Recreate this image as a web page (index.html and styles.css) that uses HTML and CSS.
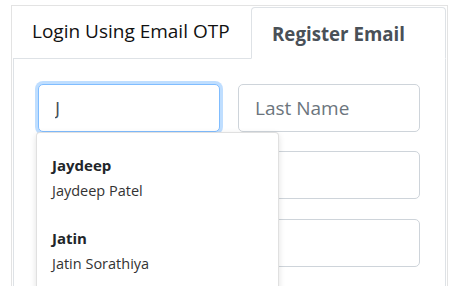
FILE: index.html
```html
<!DOCTYPE html>
<html lang="en">
<head>
<meta charset="utf-8">
<title>Register Email</title>
<link rel="stylesheet" href="styles.css">
</head>
<body>
<div class="card">
  <div class="tabs">
    <div class="tab">Login Using Email OTP</div>
    <div class="tab active">Register Email</div>
  </div>
  <div class="panel">
    <div class="row">
      <div class="field">
        <input class="input focus" type="text" value="J">
        <div class="dropdown">
          <div class="item">
            <div class="title">Jaydeep</div>
            <div class="sub">Jaydeep Patel</div>
          </div>
          <div class="item">
            <div class="title">Jatin</div>
            <div class="sub">Jatin Sorathiya</div>
          </div>
        </div>
      </div>
      <div class="field">
        <input class="input" type="text" placeholder="Last Name">
      </div>
    </div>
    <div class="full"><input class="input" type="text"></div>
    <div class="full"><input class="input" type="text"></div>
  </div>
</div>
</body>
</html>
```
FILE: styles.css
```css
* { box-sizing: border-box; }
html, body { margin: 0; padding: 0; background: #fff; }
body { font-family: "Open Sans", "Noto Sans", sans-serif; color: #212529; overflow: hidden; height: 286px; }

.card {
  margin: 5px 0 0 11px;
  width: 437px;
  border: 1px solid #e3e3e3;
  border-bottom: none;
  padding: 0 1px 0 1px;
}

.tabs {
  display: flex;
  border-bottom: 1px solid #dee2e6;
  height: 53px;
  padding-top: 1px;
}
.tab {
  width: 238px;
  padding: 11px 0 0 19px;
  font-size: 19px;
  color: #111;
  white-space: nowrap;
}
.tab.active {
  width: 195px;
  border: 1px solid #dee2e6;
  border-bottom-color: #fff;
  border-radius: 4px 4px 0 0;
  margin-bottom: -1px;
  padding: 13px 0 0 20px;
  font-size: 18.7px;
  font-weight: 700;
  color: #495057;
}

.panel {
  border: 1px solid #dee2e6;
  border-top: none;
  padding: 25px 25px 40px 24px;
}
.row {
  display: flex;
  gap: 18px;
  margin-bottom: 19px;
}
.field { flex: 1; position: relative; }
.full { margin-bottom: 20px; }

.input {
  display: block;
  width: 100%;
  height: 48px;
  padding: 8px 16px;
  font-family: inherit;
  font-size: 19px;
  color: #495057;
  background: #fff;
  border: 1px solid #ced4da;
  border-radius: 5px;
  outline: none;
}
.input::placeholder { color: #6c757d; }
.input.focus {
  border-color: #80bdff;
  box-shadow: 0 0 0 3px rgba(0, 123, 255, .25);
}

.dropdown {
  position: absolute;
  left: -2px;
  top: 100%;
  width: 243px;
  padding-bottom: 30px;
  background: #fff;
  border: 1px solid rgba(0, 0, 0, .12);
  border-radius: 4px;
  box-shadow: 0 2px 6px rgba(0, 0, 0, .12);
  z-index: 5;
}
.item { padding: 20px 15px 3px; }
.title { font-size: 15px; font-weight: 700; color: #212529; line-height: 24px; }
.sub { font-size: 14.5px; color: #333; line-height: 24px; margin-top: 2px; }
```
